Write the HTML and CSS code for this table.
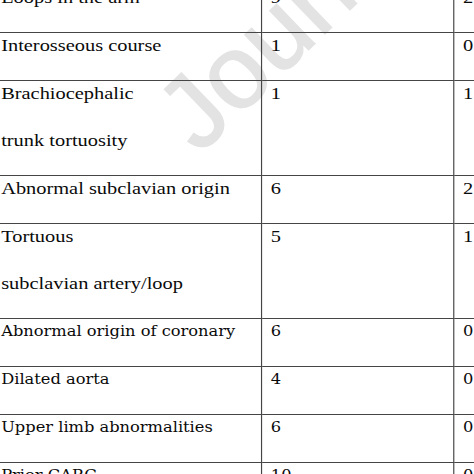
FILE: index.html
```html
<!DOCTYPE html>
<html>
<head>
<meta charset="utf-8">
<link rel="stylesheet" href="styles.css">
</head>
<body>
<div class="page">
  <div class="wm">Journal</div>
  <div class="sheet">
    <table class="grid">
      <colgroup><col class="col-a"><col class="col-b"><col class="col-c"></colgroup>
      <tr><td class="c1"><span class="t">Loops in the arm</span></td><td><span class="t">9</span></td><td><span class="t">2</span></td></tr>
      <tr><td class="c1"><span class="t">Interosseous course</span></td><td><span class="t">1</span></td><td><span class="t">0</span></td></tr>
      <tr><td class="c1"><span class="t">Brachiocephalic<br>trunk tortuosity</span></td><td><span class="t">1</span></td><td><span class="t">1</span></td></tr>
      <tr><td class="c1"><span class="t">Abnormal subclavian origin</span></td><td><span class="t">6</span></td><td><span class="t">2</span></td></tr>
      <tr><td class="c1"><span class="t">Tortuous<br>subclavian artery/loop</span></td><td><span class="t">5</span></td><td><span class="t">1</span></td></tr>
      <tr class="alt"><td class="c1"><span class="t">Abnormal origin of coronary</span></td><td><span class="t">6</span></td><td><span class="t">0</span></td></tr>
      <tr class="alt"><td class="c1"><span class="t">Dilated aorta</span></td><td><span class="t">4</span></td><td><span class="t">0</span></td></tr>
      <tr class="alt"><td class="c1"><span class="t">Upper limb abnormalities</span></td><td><span class="t">6</span></td><td><span class="t">0</span></td></tr>
      <tr class="alt"><td class="c1"><span class="t">Prior CABG</span></td><td><span class="t">10</span></td><td><span class="t">0</span></td></tr>
    </table>
  </div>
</div>
</body>
</html>
```
FILE: styles.css
```css
html, body {
  margin: 0;
  padding: 0;
  background: #fff;
  overflow: hidden;
}
.page {
  position: relative;
  width: 474px;
  height: 474px;
  overflow: hidden;
}
.wm {
  position: absolute;
  left: 0;
  top: 0;
  font-family: "Liberation Sans", sans-serif;
  font-size: 104px;
  line-height: 1;
  color: #e3e3e3;
  -webkit-text-stroke: 1.5px #e3e3e3;
  white-space: nowrap;
  transform-origin: 0 0;
  transform: translate(138px, 92px) rotate(-44deg);
}
.sheet {
  position: relative;
  margin-top: -16px;
  transform: scaleX(1.165);
  transform-origin: 0 0;
}
.grid {
  border-collapse: collapse;
  table-layout: fixed;
  width: 440px;
  font-family: "Liberation Serif", "Times New Roman", serif;
  font-size: 17.5px;
  color: #0a0a0a;
}
.col-a { width: 224px; }
.col-b { width: 165px; }
.col-c { width: 51px; }
.grid td {
  border: 1px solid #454545;
  padding: 0 0 0 8px;
  vertical-align: top;
  line-height: 47px;
  white-space: nowrap;
  overflow: hidden;
}
.grid td.c1 {
  border-left: none;
  padding-left: 1px;
}
.t {
  display: block;
  margin: -11px 0 11px;
}
.alt td {
  font-family: "DejaVu Serif", serif;
  font-stretch: condensed;
  font-size: 15.5px;
}
```
